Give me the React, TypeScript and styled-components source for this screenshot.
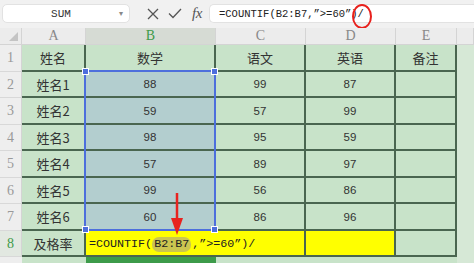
import React from 'react';
import styled, { createGlobalStyle, css } from 'styled-components';

const Global = createGlobalStyle`
  html, body { margin: 0; padding: 0; background: #f1f1f1; }
  body { width: 474px; height: 263px; overflow: hidden; }
`;

const LINE = '#4a6650';

const Page = styled.div`
  width: 474px;
  height: 263px;
  display: flex;
  flex-direction: column;
  background: #f1f1f1;
  overflow: hidden;
`;

const Bar = styled.div`
  height: 31px;
  box-sizing: border-box;
  padding: 4px 0 0 2px;
  display: flex;
  align-items: flex-start;
`;

const NameBox = styled.div`
  width: 128px;
  height: 19px;
  box-sizing: border-box;
  background: #fff;
  border: 1px solid #e2e2e2;
  border-radius: 5px;
  display: flex;
  align-items: center;
`;

const NameText = styled.span`
  flex: 1;
  text-align: center;
  font-family: "Liberation Mono", monospace;
  font-size: 11px;
  color: #333;
`;

const Caret = styled.span`
  width: 10px;
  font-family: "Liberation Sans", sans-serif;
  font-size: 8px;
  color: #888;
  text-align: left;
`;

const Icons = styled.div`
  display: flex;
  margin-left: 12px;
`;

const IconSlot = styled.div`
  width: 22px;
  height: 19px;
  display: flex;
  align-items: center;
  justify-content: center;
`;

const Fx = styled.span`
  font-family: "Liberation Serif", serif;
  font-style: italic;
  font-size: 15px;
  color: #555;
  letter-spacing: -0.5px;
`;

const FormulaBox = styled.div`
  position: relative;
  flex: 1;
  height: 19px;
  margin-left: 1px;
  box-sizing: border-box;
  background: #fff;
  border: 1px solid #e2e2e2;
  border-right: none;
  border-radius: 5px 0 0 5px;
  padding-left: 9px;
  display: flex;
  align-items: center;
  font-family: "Liberation Mono", monospace;
  font-size: 10.5px;
  color: #222;
  white-space: pre;
`;

const RedCircle = styled.div`
  position: absolute;
  left: 142px;
  top: -1px;
  width: 20px;
  height: 25px;
  box-sizing: border-box;
  border: 2px solid #e8201c;
  border-radius: 50%;
`;

const Sheet = styled.div`
  position: relative;
  display: grid;
  grid-template-columns: 22px 64px 130px 90px 90px 61px 17px;
  grid-template-rows: 17px 27px 26px 27px 26px 27px 26px 27px 26px 6px;
`;

const Corner = styled.div`
  background: #ececec;
  border-right: 1px solid #d4d4d4;
  border-bottom: 1px solid #d4d4d4;
  display: flex;
  align-items: flex-end;
  justify-content: flex-end;
  padding: 0 3px 3px 0;
`;

const ColHead = styled.div<{ $active?: boolean }>`
  box-sizing: border-box;
  background: ${(p) => (p.$active ? '#d6dbd4' : '#ececec')};
  border-right: 1px solid #d4d4d4;
  border-bottom: 1px solid #d4d4d4;
  display: flex;
  align-items: center;
  justify-content: center;
  font-family: "Liberation Serif", serif;
  font-size: 14px;
  color: ${(p) => (p.$active ? '#3e9a49' : '#888')};
`;

const RowHead = styled.div<{ $active?: boolean }>`
  box-sizing: border-box;
  background: ${(p) => (p.$active ? '#e2e8e1' : '#eeeeee')};
  border-right: 1px solid #d4d4d4;
  border-bottom: 1px solid #d8d8d8;
  display: flex;
  align-items: center;
  justify-content: center;
  font-family: "Liberation Serif", serif;
  font-size: 14px;
  color: ${(p) => (p.$active ? '#3e9a49' : '#999')};
`;

type Tone = 'green' | 'sel' | 'yellow';
const toneBg: Record<Tone, string> = {
  green: '#c8e3c9',
  sel: '#b3cecf',
  yellow: '#ffff00',
};

const Cell = styled.div<{ $tone: Tone; $cjk?: boolean }>`
  box-sizing: border-box;
  background: ${(p) => toneBg[p.$tone]};
  border-right: 2px solid ${LINE};
  border-bottom: 2px solid ${LINE};
  display: flex;
  align-items: center;
  justify-content: center;
  color: #333;
  ${(p) =>
    p.$cjk
      ? css`
          font-family: "Noto Sans CJK SC", sans-serif;
          font-size: 13px;
        `
      : css`
          font-family: "Liberation Sans", sans-serif;
          font-size: 11.5px;
        `}
`;

const FormulaCell = styled.div`
  grid-column: span 2;
  box-sizing: border-box;
  background: #ffff00;
  border-right: 2px solid ${LINE};
  border-bottom: 2px solid ${LINE};
  display: flex;
  align-items: center;
  padding: 2px 0 0 3px;
  font-family: "Liberation Mono", monospace;
  font-size: 11.7px;
  color: #222;
  white-space: pre;
`;

const RefMark = styled.span`
  display: inline-block;
  background: #cbc550;
  border-radius: 7px;
  padding: 0 2px;
  margin: 0 1px 0 0;
  line-height: 15px;
`;

const Filler = styled.div<{ $bg: string }>`
  background: ${(p) => p.$bg};
`;

const Selection = styled.div`
  position: absolute;
  left: 84px;
  top: 42px;
  width: 132px;
  height: 161px;
  box-sizing: border-box;
  border: 2px solid #4d6fdc;
  pointer-events: none;
`;

const Handle = styled.span<{ $x: 'l' | 'r'; $y: 't' | 'b' }>`
  position: absolute;
  width: 5px;
  height: 5px;
  background: #4d6fdc;
  border: 1px solid #fff;
  ${(p) => (p.$x === 'l' ? 'left: -4px;' : 'right: -4px;')}
  ${(p) => (p.$y === 't' ? 'top: -4px;' : 'bottom: -4px;')}
`;

const Arrow = styled.svg`
  position: absolute;
  left: 170px;
  top: 165px;
`;

const rows: [string, number, number, number][] = [
  ['姓名1', 88, 99, 87],
  ['姓名2', 59, 57, 99],
  ['姓名3', 98, 95, 59],
  ['姓名4', 57, 89, 97],
  ['姓名5', 99, 56, 86],
  ['姓名6', 60, 86, 96],
];

export default function App() {
  return (
    <Page>
      <Global />
      <Bar>
        <NameBox>
          <NameText>SUM</NameText>
          <Caret>▾</Caret>
        </NameBox>
        <Icons>
          <IconSlot>
            <svg width="12" height="12" viewBox="0 0 12 12">
              <path d="M1 1 L11 11 M11 1 L1 11" stroke="#555" strokeWidth="1.3" fill="none" />
            </svg>
          </IconSlot>
          <IconSlot>
            <svg width="14" height="11" viewBox="0 0 14 11">
              <path d="M1 5.5 L5 9.5 L13 1" stroke="#555" strokeWidth="1.3" fill="none" />
            </svg>
          </IconSlot>
          <IconSlot>
            <Fx>fx</Fx>
          </IconSlot>
        </Icons>
        <FormulaBox>
          {'=COUNTIF(B2:B7,”>=60”)/'}
          <RedCircle />
        </FormulaBox>
      </Bar>
      <Sheet>
        <Corner>
          <svg width="9" height="9" viewBox="0 0 9 9">
            <path d="M9 0 L9 9 L0 9 Z" fill="#c4c4c4" />
          </svg>
        </Corner>
        <ColHead>A</ColHead>
        <ColHead $active>B</ColHead>
        <ColHead>C</ColHead>
        <ColHead>D</ColHead>
        <ColHead>E</ColHead>
        <ColHead />

        <RowHead>1</RowHead>
        <Cell $tone="green" $cjk>姓名</Cell>
        <Cell $tone="green" $cjk>数学</Cell>
        <Cell $tone="green" $cjk>语文</Cell>
        <Cell $tone="green" $cjk>英语</Cell>
        <Cell $tone="green" $cjk>备注</Cell>
        <Filler $bg="#d6e8d6" />

        {rows.map(([name, m, c, e], i) => (
          <React.Fragment key={name}>
            <RowHead>{i + 2}</RowHead>
            <Cell $tone="green" $cjk>{name}</Cell>
            <Cell $tone="sel">{m}</Cell>
            <Cell $tone="green">{c}</Cell>
            <Cell $tone="green">{e}</Cell>
            <Cell $tone="green" />
            <Filler $bg="#d6e8d6" />
          </React.Fragment>
        ))}

        <RowHead $active>8</RowHead>
        <Cell $tone="green" $cjk>及格率</Cell>
        <FormulaCell>
          {'=COUNTIF('}
          <RefMark>B2:B7</RefMark>
          {',”>=60”)/'}
        </FormulaCell>
        <Cell $tone="yellow" />
        <Cell $tone="green" />
        <Filler $bg="#d6e8d6" />

        <Filler $bg="#eeeeee" />
        <Filler $bg="#c8e3c9" />
        <Filler $bg="#3d9b4a" />
        <Filler $bg="#c8e3c9" />
        <Filler $bg="#c8e3c9" />
        <Filler $bg="#c8e3c9" />
        <Filler $bg="#d6e8d6" />

        <Selection>
          <Handle $x="l" $y="t" />
          <Handle $x="r" $y="t" />
          <Handle $x="l" $y="b" />
          <Handle $x="r" $y="b" />
        </Selection>
        <Arrow width="14" height="42" viewBox="0 0 14 42">
          <path d="M7 0 L7 28" stroke="#e8231f" strokeWidth="2.5" />
          <path d="M1 25 L13 25 L7 42 Z" fill="#e8231f" />
        </Arrow>
      </Sheet>
    </Page>
  );
}
